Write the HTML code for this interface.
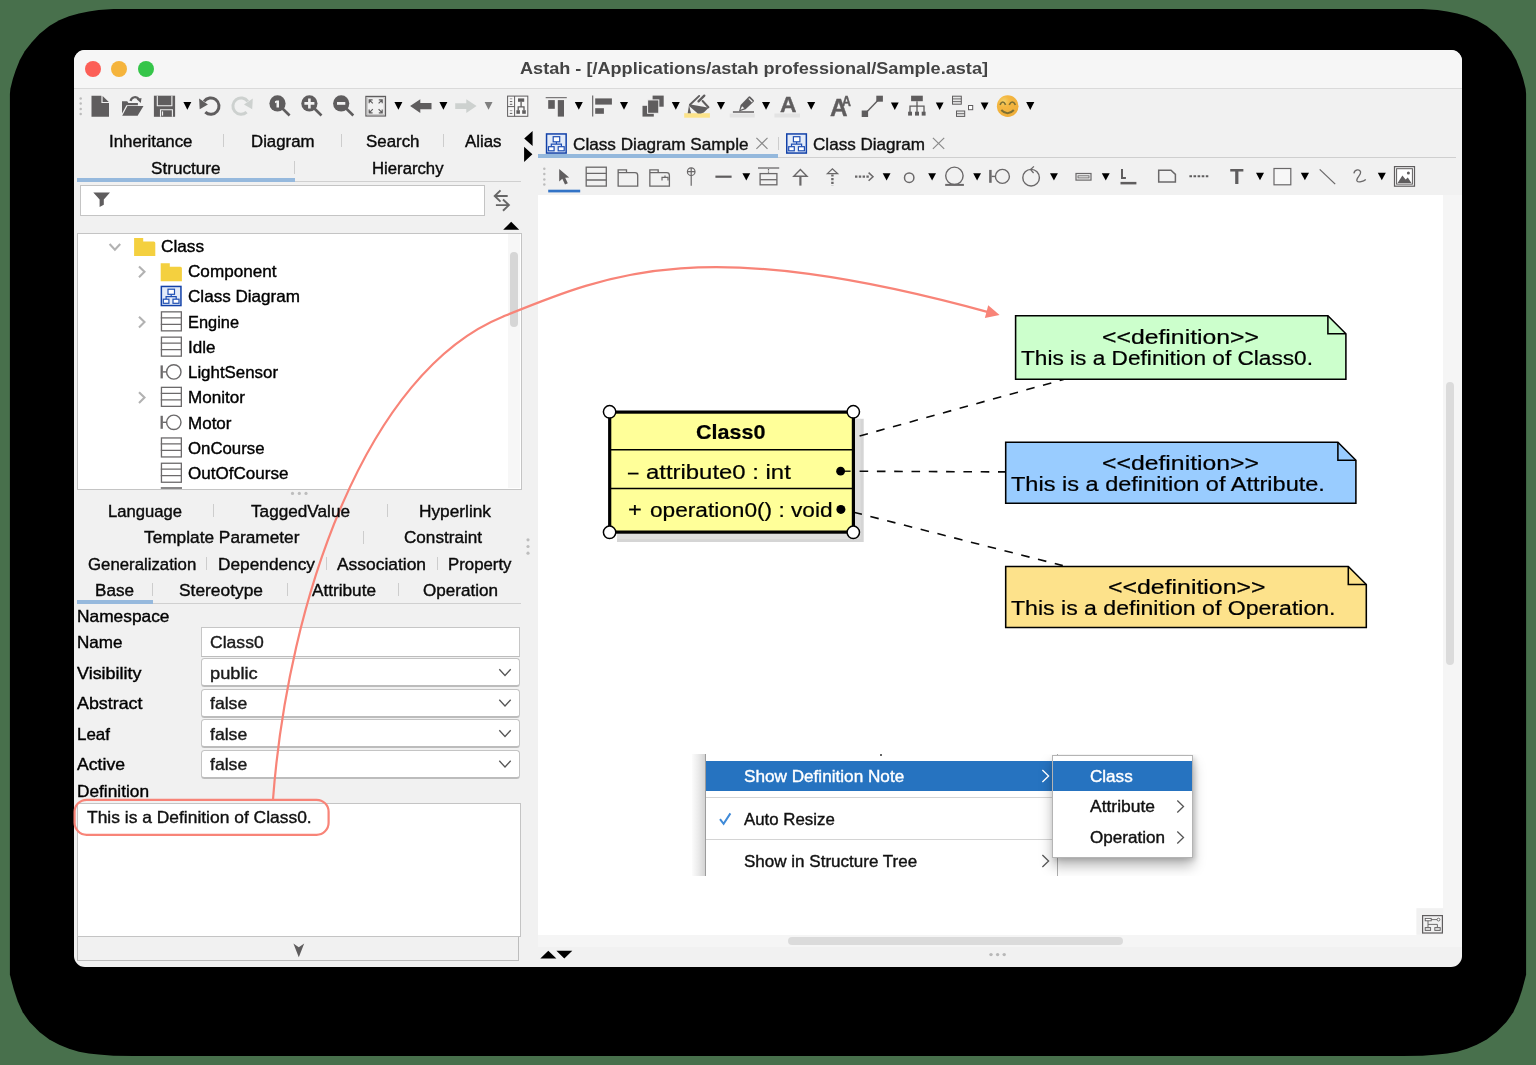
<!DOCTYPE html>
<html><head><meta charset="utf-8"><title>Astah</title>
<style>
html,body{margin:0;padding:0}
body{width:1536px;height:1065px;overflow:hidden;position:relative;background:#48704c;font-family:"Liberation Sans",sans-serif}
.a{position:absolute}
.t{position:absolute;white-space:pre;line-height:1em;transform-origin:0 50%;font-family:"Liberation Sans",sans-serif}
svg{position:absolute;left:0;top:0}
</style></head><body>
<svg width="1536" height="1065" viewBox="0 0 1536 1065"><path d="M9.9 93.7 L10.4 88.8 L12.8 78.9 L15.8 70.0 L19.7 60.2 L24.7 51.3 L31.6 42.4 L39.4 34.0 L49.3 26.1 L59.2 20.2 L69.0 16.3 L78.9 13.6 L88.8 11.6 L98.6 9.9 L113.4 9.1 L1422.6 9.1 L1437.4 9.9 L1447.2 11.6 L1457.1 13.6 L1467.0 16.3 L1476.8 20.2 L1486.7 26.1 L1496.6 34.0 L1504.4 42.4 L1511.3 51.3 L1516.3 60.2 L1520.2 70.0 L1523.2 78.9 L1525.6 88.8 L1526.1 93.7 L1526.1 974.8 L1522.2 989.6 L1518.2 1001.4 L1513.3 1012.3 L1506.4 1022.1 L1496.6 1032.0 L1486.7 1039.4 L1476.8 1044.8 L1467.0 1048.8 L1457.1 1051.7 L1447.2 1053.5 L1437.4 1054.5 L1422.6 1055.7 L1403.0 1056.0 L133.0 1056.0 L113.4 1055.7 L98.6 1054.5 L88.8 1053.5 L78.9 1051.7 L69.0 1048.8 L59.2 1044.8 L49.3 1039.4 L39.4 1032.0 L29.6 1022.1 L22.7 1012.3 L17.8 1001.4 L13.8 989.6 L9.9 974.8 Z" fill="#000"/></svg>
<div class="a" style="left:74px;top:50px;width:1388px;height:917px;background:#f1f1f1;border-radius:11px;overflow:hidden"><div class="a" style="left:0;top:0;width:1388px;height:38px;background:#f6f6f6;border-bottom:1px solid #dadada"></div></div>
<div class="a" style="left:85px;top:61px;width:16px;height:16px;border-radius:50%;background:#fc5f57"></div>
<div class="a" style="left:111.4px;top:61px;width:16px;height:16px;border-radius:50%;background:#f5b43c"></div>
<div class="a" style="left:138px;top:61px;width:16px;height:16px;border-radius:50%;background:#35c549"></div>
<div class="a" style="left:223px;top:134.2px;width:1.2px;height:13px;background:#cdcdcd"></div>
<div class="a" style="left:341px;top:134.2px;width:1.2px;height:13px;background:#cdcdcd"></div>
<div class="a" style="left:443px;top:134.2px;width:1.2px;height:13px;background:#cdcdcd"></div>
<div class="a" style="left:294px;top:161.2px;width:1.2px;height:13px;background:#cdcdcd"></div>
<div class="a" style="left:77px;top:181px;width:444px;height:1px;background:#d0d0d0"></div>
<div class="a" style="left:77px;top:178.2px;width:218px;height:3.6px;background:#96b9dd"></div>
<div class="a" style="left:80px;top:185px;width:403px;height:29px;background:#fff;border:1px solid #c4c4c4"></div>
<div class="a" style="left:77px;top:233px;width:443px;height:255px;background:#fff;border:1px solid #c4c4c4"></div>
<div class="a" style="left:508px;top:234px;width:12px;height:254px;background:#f7f7f7"></div>
<div class="a" style="left:510px;top:252px;width:8px;height:75px;background:#d6d6d6;border-radius:4px"></div>
<div class="a" style="left:213px;top:504.0px;width:1.2px;height:13px;background:#cdcdcd"></div>
<div class="a" style="left:387px;top:504.0px;width:1.2px;height:13px;background:#cdcdcd"></div>
<div class="a" style="left:363px;top:530.5px;width:1.2px;height:13px;background:#cdcdcd"></div>
<div class="a" style="left:206px;top:556.9000000000001px;width:1.2px;height:13px;background:#cdcdcd"></div>
<div class="a" style="left:325.5px;top:556.9000000000001px;width:1.2px;height:13px;background:#cdcdcd"></div>
<div class="a" style="left:436.5px;top:556.9000000000001px;width:1.2px;height:13px;background:#cdcdcd"></div>
<div class="a" style="left:152px;top:583.4000000000001px;width:1.2px;height:13px;background:#cdcdcd"></div>
<div class="a" style="left:287px;top:583.4000000000001px;width:1.2px;height:13px;background:#cdcdcd"></div>
<div class="a" style="left:397.5px;top:583.4000000000001px;width:1.2px;height:13px;background:#cdcdcd"></div>
<div class="a" style="left:77px;top:603px;width:444px;height:1px;background:#d0d0d0"></div>
<div class="a" style="left:77px;top:600px;width:75.6px;height:3.5px;background:#96b9dd"></div>
<div class="a" style="left:201px;top:627.3px;width:318.8px;height:29.5px;background:#fff;border:1px solid #c6c6c6;border-bottom:1.6px solid #bdbdbd;box-sizing:border-box"></div>
<div class="a" style="left:201px;top:658.3px;width:318.8px;height:29.2px;background:#fff;border:1px solid #c4c4c4;border-bottom:2px solid #bcbcbc;border-radius:3.5px;box-sizing:border-box"></div>
<div class="a" style="left:201px;top:688.8px;width:318.8px;height:29.2px;background:#fff;border:1px solid #c4c4c4;border-bottom:2px solid #bcbcbc;border-radius:3.5px;box-sizing:border-box"></div>
<div class="a" style="left:201px;top:719.3px;width:318.8px;height:29.2px;background:#fff;border:1px solid #c4c4c4;border-bottom:2px solid #bcbcbc;border-radius:3.5px;box-sizing:border-box"></div>
<div class="a" style="left:201px;top:749.8px;width:318.8px;height:29.2px;background:#fff;border:1px solid #c4c4c4;border-bottom:2px solid #bcbcbc;border-radius:3.5px;box-sizing:border-box"></div>
<div class="a" style="left:77px;top:803px;width:444px;height:134px;background:#fff;border:1px solid #c4c4c4;box-sizing:border-box"></div>
<div class="a" style="left:77px;top:937px;width:442px;height:24px;background:#f1f1f1;border:1px solid #bdbdbd;border-top:none;box-sizing:border-box"></div>
<div class="a" style="left:778px;top:136.79999999999998px;width:1.2px;height:13px;background:#cdcdcd"></div>
<div class="a" style="left:538px;top:157px;width:918px;height:1px;background:#cfcfcf"></div>
<div class="a" style="left:538px;top:154.3px;width:239.7px;height:3.4px;background:#94b8dc"></div>
<div class="a" style="left:538px;top:194.7px;width:923.5px;height:752.7px;background:#f5f5f5"></div>
<div class="a" style="left:538px;top:194.7px;width:905.2px;height:740.1px;background:#fff"></div>
<div class="a" style="left:1445.9px;top:382.3px;width:8.3px;height:283px;background:#dbdbdb;border-radius:4.2px"></div>
<div class="a" style="left:788.1px;top:937.2px;width:335.2px;height:8.3px;background:#dbdbdb;border-radius:4.2px"></div>
<div class="a" style="left:692.4px;top:754.3px;width:526px;height:121.6px;overflow:hidden"><div class="a" style="left:0;top:0;width:13.2px;height:122px;background:linear-gradient(to right,#fcfcfc,#ebebeb 45%,#d0d0d0)"></div><div class="a" style="left:12.8px;top:-5px;width:353.20000000000005px;height:140px;background:#fff;border-left:1.2px solid #9c9c9c;border-right:1.3px solid #b0b0b0;box-sizing:border-box"></div><div class="a" style="left:187.6px;top:0;width:2px;height:1.6px;background:#666"></div><div class="a" style="left:14.0px;top:6.7px;width:346.6px;height:30.2px;background:#2673c0"></div><div class="a" style="left:14.0px;top:42.5px;width:350.80000000000007px;height:1.2px;background:#d4d4d4"></div><div class="a" style="left:14.0px;top:84.8px;width:350.80000000000007px;height:1.2px;background:#d4d4d4"></div><div class="a" style="left:359.2px;top:1.0px;width:141.9000000000001px;height:102.40000000000009px;background:#fff;border:1.3px solid #b4b4b4;box-sizing:border-box;box-shadow:0 8px 12px rgba(0,0,0,.28),2px 2px 5px rgba(0,0,0,.15)"></div><div class="a" style="left:360.5px;top:6.5px;width:139.39999999999986px;height:30.2px;background:#2673c0"></div></div>
<svg width="1536" height="1065" viewBox="0 0 1536 1065">
<circle cx="80.7" cy="98.4" r="1.25" fill="#bcbcbc"/>
<circle cx="80.7" cy="103.6" r="1.25" fill="#bcbcbc"/>
<circle cx="80.7" cy="108.9" r="1.25" fill="#bcbcbc"/>
<circle cx="80.7" cy="114.1" r="1.25" fill="#bcbcbc"/>
<path d="M91.5 95.7 H101.4 V102.9 H109 V116.8 H91.5 Z M102.6 96 L108.8 102 H102.6 Z" fill="#5f5d5e"/>
<path d="M122 101.2 H127.2 L128.4 103 H137.9 V105.3 H126.4 L122 113.6 Z" fill="#5f5d5e"/>
<path d="M127.4 106 H143.5 L137.6 115.7 H122.2 Z" fill="#5f5d5e"/>
<path d="M130.6 101 C131.4 96.6 136.8 95.9 139.2 99.6" fill="none" stroke="#5f5d5e" stroke-width="2.2"/>
<path d="M136.7 99.2 L141.5 98.1 L140.8 102.9 Z" fill="#5f5d5e"/>
<rect x="153.9" y="95.7" width="21.2" height="21.1" fill="#5f5d5e"/>
<path d="M157.3 95.7 V105.7 H171.9 V95.7" fill="none" stroke="#f1f1f1" stroke-width="1.1"/>
<path d="M160.5 116.8 V109.8 H172.4 V116.8" fill="none" stroke="#f1f1f1" stroke-width="1.1"/>
<rect x="161.9" y="111.4" width="1.2" height="4.2" fill="#f1f1f1"/>
<path d="M183.4 102 H191.3 L187.35000000000002 109.8 Z" fill="#000"/>
<path d="M204.1 101.4 A8.2 8.2 0 1 1 205.3 112.2" fill="none" stroke="#5f5d5e" stroke-width="3"/>
<path d="M199.1 98.4 L199.7 109.2 L207.9 104.4 Z" fill="#5f5d5e"/>
<path d="M247.8 101.4 A8.2 8.2 0 1 0 246.6 112.2" fill="none" stroke="#cdd1cf" stroke-width="3"/>
<path d="M252.8 98.4 L252.2 109.2 L244 104.4 Z" fill="#cdd1cf"/>
<path d="M282.5 108.5 L289.6 115.5" stroke="#5f5d5e" stroke-width="2.6"/>
<circle cx="277.5" cy="103.4" r="8.1" fill="#5f5d5e"/>
<path d="M275 101.2 L276.6 100.4 H279 V107.4 H276.5 V102.6 L275 103.2 Z" fill="#f1f1f1"/>
<path d="M314.4 108.5 L321.5 115.5" stroke="#5f5d5e" stroke-width="2.6"/>
<circle cx="309.4" cy="103.4" r="8.1" fill="#5f5d5e"/>
<path d="M304.4 103.4 H314.4 M309.4 98.4 V108.4" stroke="#f1f1f1" stroke-width="2.6"/>
<path d="M346.2 108.5 L353.3 115.5" stroke="#5f5d5e" stroke-width="2.6"/>
<circle cx="341.2" cy="103.4" r="8.1" fill="#5f5d5e"/>
<path d="M337 103.4 H345.3" stroke="#f1f1f1" stroke-width="2.8"/>
<rect x="365.9" y="96.4" width="19.6" height="19.6" fill="none" stroke="#5f5d5e" stroke-width="1.2"/>
<rect x="367.2" y="97.7" width="17" height="17" fill="none" stroke="#b9b8b8" stroke-width=".8"/>
<path d="M372.8 103.39999999999999 L369.2 99.8 M372.59999999999997 99.8 H369.2 V103.2" fill="none" stroke="#5f5d5e" stroke-width="1.2"/>
<path d="M378.59999999999997 103.39999999999999 L382.2 99.8 M378.8 99.8 H382.2 V103.2" fill="none" stroke="#5f5d5e" stroke-width="1.2"/>
<path d="M372.8 109.2 L369.2 112.8 M372.59999999999997 112.8 H369.2 V109.39999999999999" fill="none" stroke="#5f5d5e" stroke-width="1.2"/>
<path d="M378.59999999999997 109.2 L382.2 112.8 M378.8 112.8 H382.2 V109.39999999999999" fill="none" stroke="#5f5d5e" stroke-width="1.2"/>
<path d="M394.4 102 H402.4 L398.4 109.8 Z" fill="#000"/>
<path d="M410.1 106.1 L420.3 99.3 V103 H431.5 V109.2 H420.3 V113.1 Z" fill="#5f5d5e"/>
<path d="M439.4 102 H447.4 L443.4 109.8 Z" fill="#000"/>
<path d="M476.6 106.1 L466.3 99.3 V103.3 H455.2 V109.1 H466.3 V113.1 Z" fill="#cdd1cf"/>
<path d="M484.6 102 H492.5 L488.55 109.8 Z" fill="#7f7f7f"/>
<rect x="507.6" y="96.1" width="20.2" height="20.2" fill="#f8f8f8" stroke="#5f5d5e" stroke-width="1"/>
<path d="M514.6 96.1 V116.3 M507.6 106.6 H514.6" stroke="#5f5d5e" stroke-width="1"/>
<path d="M509.8 101.6 H512.3 M509.8 104.3 H512.3 M509.8 113.4 H512.3" stroke="#5f5d5e" stroke-width="1"/><path d="M509.8 98.8 H512.3 M509.8 110.7 H512.3" stroke="#9a9899" stroke-width="1"/>
<rect x="518" y="98.4" width="6.2" height="3.4" fill="#5f5d5e"/><rect x="516.4" y="110.2" width="3.5" height="3.6" fill="#5f5d5e"/><rect x="522.2" y="110.2" width="3.6" height="3.6" fill="#5f5d5e"/>
<path d="M521.1 101.8 V106.8 M518.2 110.2 V106.8 H524 V110.2" fill="none" stroke="#5f5d5e" stroke-width="1.3"/>
<path d="M545.7 97.7 H566.8" stroke="#5f5d5e" stroke-width="1"/>
<rect x="548.2" y="100.1" width="6.6" height="8.7" fill="#5f5d5e"/><rect x="557.8" y="100.1" width="6.2" height="16.5" fill="#5f5d5e"/>
<path d="M574.8 102 H582.8 L578.8 109.8 Z" fill="#000"/>
<path d="M592.7 95.6 V116.6" stroke="#5f5d5e" stroke-width="1.1"/>
<rect x="595.2" y="98.4" width="16.7" height="6.2" fill="#5f5d5e"/><rect x="595.2" y="108.2" width="8.7" height="5.6" fill="#5f5d5e"/>
<path d="M620 102 H628 L624.0 109.8 Z" fill="#000"/>
<rect x="652.6" y="95.6" width="11.1" height="11.1" fill="#5f5d5e"/><rect x="642.5" y="105.8" width="11.3" height="10.8" fill="#5f5d5e"/>
<rect x="647.6" y="99.9" width="11.2" height="13.4" fill="#5f5d5e" stroke="#f1f1f1" stroke-width="1"/>
<path d="M671.8 102 H679.8 L675.8 109.8 Z" fill="#000"/>
<rect x="684.2" y="113.2" width="25.7" height="4.5" fill="#fce38a"/>
<path d="M689.3 104.3 L706.2 107.2 L708.9 107.5 L703.8 112.4 L700.8 113.4 H697.8 L689.4 106.2 Z" fill="#5f5d5e"/>
<path d="M689.9 104.7 L699.2 95.9" stroke="#5f5d5e" stroke-width="1.9" stroke-linecap="round"/>
<path d="M702.6 101 L708.4 107.2" stroke="#5f5d5e" stroke-width="2" stroke-linecap="round"/>
<path d="M698.5 101.4 L704.3 95.6" stroke="#5f5d5e" stroke-width="2.3" stroke-linecap="round"/>
<path d="M689 105 L691 113.3 H687.7 Z" fill="#5f5d5e"/>
<path d="M716.9 102 H725 L720.95 109.8 Z" fill="#000"/>
<rect x="729.7" y="113.6" width="25" height="3.9" fill="#e3e3e3"/>
<path d="M732.9 112 H754" stroke="#5f5d5e" stroke-width="1.5"/>
<path d="M739 111.4 L740.6 104.9 L748.6 96.7 Q749.5 95.8 750.4 96.7 L753.6 100 Q754.4 100.9 753.6 101.8 L745.6 109.3 Z" fill="#5f5d5e"/>
<path d="M740.4 109.8 L742.1 106.2 L744.3 108.2 Z" fill="#f1f1f1"/><path d="M749.2 98.9 L751.9 101.5" stroke="#f1f1f1" stroke-width="1.3" stroke-linecap="round"/>
<path d="M762 102 H770.1 L766.05 109.8 Z" fill="#000"/>
<rect x="774.4" y="113.5" width="25.6" height="4" fill="#e3e3e3"/>
<path d="M807.2 102 H815.2 L811.2 109.8 Z" fill="#000"/>
<rect x="861.7" y="110.5" width="6.4" height="6.5" fill="#5f5d5e"/><rect x="876.3" y="95.7" width="6.6" height="6" fill="#5f5d5e"/><path d="M865 113.8 L879.5 98.8" stroke="#5f5d5e" stroke-width="1.4"/>
<path d="M890.9 102.4 H898.7 L894.8 110 Z" fill="#000"/>
<rect x="911.1" y="95.7" width="11.7" height="5.5" fill="#5f5d5e"/>
<path d="M917 101.2 V106.2 M910 112 V106.2 H924 V112 M917 106.2 V112" fill="none" stroke="#5f5d5e" stroke-width="1.3"/>
<rect x="908.1" y="111.7" width="3.9" height="3.9" fill="#5f5d5e"/><rect x="915" y="111.7" width="4" height="3.9" fill="#5f5d5e"/><rect x="921.7" y="111.7" width="3.9" height="3.9" fill="#5f5d5e"/>
<path d="M935.8 102.4 H943.6 L939.7 110 Z" fill="#000"/>
<rect x="952.5" y="96.2" width="8.8" height="8" fill="#e6e6e6" stroke="#5f5d5e" stroke-width="1"/><path d="M952.5 98.9 H961.3 M952.5 101.6 H961.3" stroke="#5f5d5e" stroke-width=".9"/>
<rect x="956.5" y="111" width="8.2" height="5.4" fill="#e6e6e6" stroke="#5f5d5e" stroke-width="1"/><path d="M956.5 113.7 H964.7" stroke="#5f5d5e" stroke-width=".9"/>
<rect x="968.5" y="105.5" width="4.2" height="4.2" fill="#fff" stroke="#5f5d5e" stroke-width="1"/>
<path d="M980.7 102.4 H988.5 L984.6 110 Z" fill="#000"/>
<defs><radialGradient id="em" cx="32%" cy="28%" r="75%"><stop offset="0" stop-color="#f3d26a"/><stop offset=".35" stop-color="#f4b741"/><stop offset="1" stop-color="#efae3a"/></radialGradient></defs>
<circle cx="1007.7" cy="106.15" r="10.8" fill="url(#em)"/>
<path d="M1000 104.8 Q1002.8 99.2 1005.6 104.8 M1009.2 104.8 Q1012.3 99.2 1015.4 104.8" fill="none" stroke="#7d7034" stroke-width="1.7"/>
<path d="M1001.3 110 Q1007.6 116.6 1013.8 110" fill="none" stroke="#7d7034" stroke-width="2"/>
<path d="M1026.2 102 H1034.3 L1030.25 109.9 Z" fill="#000"/>
<path d="M524.2 138.5 L532.6 131 V146 Z M524.1 146.8 L532.4 154.3 L524.1 161.9 Z" fill="#000"/>
<path d="M93.3 192.5 H110 L103.8 199.6 V204.8 L99.6 207 V199.6 Z" fill="#5f5d5e"/>
<path d="M507.7 196 H495 M500.5 190.4 L494.7 196 L500.5 201.6 M495.9 205.1 H508.6 M503 199.5 L508.9 205.1 L503 210.8" fill="none" stroke="#666" stroke-width="1.9"/>
<path d="M503.2 229.8 L511.2 221.7 L519.2 229.8 Z" fill="#000"/>
<path d="M109.6 244 L114.9 249.6 L120.2 244" fill="none" stroke="#b2b2b2" stroke-width="2.1"/>
<path d="M139 266.40000000000003 L144.5 271.8 L139 277.2" fill="none" stroke="#b2b2b2" stroke-width="2.1"/>
<path d="M139 316.70000000000005 L144.5 322.1 L139 327.5" fill="none" stroke="#b2b2b2" stroke-width="2.1"/>
<path d="M139 392.20000000000005 L144.5 397.6 L139 403.0" fill="none" stroke="#b2b2b2" stroke-width="2.1"/>
<path d="M134.1 238 H143.2 V241.4 H153.79999999999998 Q155.29999999999998 241.4 155.29999999999998 243 V255.9 H134.1 Z" fill="#f4d03f"/>
<path d="M160.7 263.3 H169.79999999999998 V266.7 H180.39999999999998 Q181.89999999999998 266.7 181.89999999999998 268.3 V281.2 H160.7 Z" fill="#f4d03f"/>
<rect x="161.35" y="286.45" width="19.6" height="19.1" fill="#e3ebf8" stroke="#1241a8" stroke-width="1.5"/>
<path d="M171.2 294.3 V296.7 M166.1 299.2 V296.7 H176.2 V299.2" fill="none" stroke="#1f4fb4" stroke-width="1.2"/>
<rect x="168.0" y="289.2" width="6.5" height="5.1" fill="#fff" stroke="#1f4fb4" stroke-width="1.2"/>
<rect x="163.29999999999998" y="299.2" width="5.6" height="4.1" fill="#fff" stroke="#1f4fb4" stroke-width="1.2"/><rect x="173.0" y="299.2" width="6" height="4.1" fill="#fff" stroke="#1f4fb4" stroke-width="1.2"/>
<rect x="546.55" y="133.95" width="19.6" height="19.1" fill="#e3ebf8" stroke="#1241a8" stroke-width="1.5"/>
<path d="M556.4 141.79999999999998 V144.2 M551.3 146.7 V144.2 H561.4 V146.7" fill="none" stroke="#1f4fb4" stroke-width="1.2"/>
<rect x="553.1999999999999" y="136.7" width="6.5" height="5.1" fill="#fff" stroke="#1f4fb4" stroke-width="1.2"/>
<rect x="548.5" y="146.7" width="5.6" height="4.1" fill="#fff" stroke="#1f4fb4" stroke-width="1.2"/><rect x="558.1999999999999" y="146.7" width="6" height="4.1" fill="#fff" stroke="#1f4fb4" stroke-width="1.2"/>
<rect x="786.75" y="133.95" width="19.6" height="19.1" fill="#e3ebf8" stroke="#1241a8" stroke-width="1.5"/>
<path d="M796.6 141.79999999999998 V144.2 M791.5 146.7 V144.2 H801.6 V146.7" fill="none" stroke="#1f4fb4" stroke-width="1.2"/>
<rect x="793.4" y="136.7" width="6.5" height="5.1" fill="#fff" stroke="#1f4fb4" stroke-width="1.2"/>
<rect x="788.7" y="146.7" width="5.6" height="4.1" fill="#fff" stroke="#1f4fb4" stroke-width="1.2"/><rect x="798.4" y="146.7" width="6" height="4.1" fill="#fff" stroke="#1f4fb4" stroke-width="1.2"/>
<rect x="161.45000000000002" y="311.84999999999997" width="19.9" height="19" fill="#fff" stroke="#6c6a6b" stroke-width="1.3"/><path d="M160.8 317.8 H182.0 M160.8 324.3 H182.0" stroke="#6c6a6b" stroke-width="1.3"/>
<rect x="161.45000000000002" y="337.15" width="19.9" height="19" fill="#fff" stroke="#6c6a6b" stroke-width="1.3"/><path d="M160.8 343.1 H182.0 M160.8 349.6 H182.0" stroke="#6c6a6b" stroke-width="1.3"/>
<rect x="161.45000000000002" y="387.34999999999997" width="19.9" height="19" fill="#fff" stroke="#6c6a6b" stroke-width="1.3"/><path d="M160.8 393.3 H182.0 M160.8 399.8 H182.0" stroke="#6c6a6b" stroke-width="1.3"/>
<rect x="161.45000000000002" y="437.95" width="19.9" height="19" fill="#fff" stroke="#6c6a6b" stroke-width="1.3"/><path d="M160.8 443.90000000000003 H182.0 M160.8 450.40000000000003 H182.0" stroke="#6c6a6b" stroke-width="1.3"/>
<rect x="161.45000000000002" y="463.25" width="19.9" height="19" fill="#fff" stroke="#6c6a6b" stroke-width="1.3"/><path d="M160.8 469.20000000000005 H182.0 M160.8 475.70000000000005 H182.0" stroke="#6c6a6b" stroke-width="1.3"/>
<rect x="160.8" y="487.2" width="21.2" height="1.6" fill="#6c6a6b"/>
<path d="M161.7 365.4 V378.4" stroke="#6c6a6b" stroke-width="2.3"/><path d="M162.6 371.9 H166.6" stroke="#6c6a6b" stroke-width="1.4"/><circle cx="173.79999999999998" cy="371.9" r="7.2" fill="#fff" stroke="#6c6a6b" stroke-width="1.4"/>
<path d="M161.7 415.8 V428.8" stroke="#6c6a6b" stroke-width="2.3"/><path d="M162.6 422.3 H166.6" stroke="#6c6a6b" stroke-width="1.4"/><circle cx="173.79999999999998" cy="422.3" r="7.2" fill="#fff" stroke="#6c6a6b" stroke-width="1.4"/>
<circle cx="292.5" cy="493.4" r="1.6" fill="#bdbdbd"/>
<circle cx="299.3" cy="493.4" r="1.6" fill="#bdbdbd"/>
<circle cx="306" cy="493.4" r="1.6" fill="#bdbdbd"/>
<circle cx="528" cy="539.8" r="1.6" fill="#bdbdbd"/>
<circle cx="528" cy="546.5" r="1.6" fill="#bdbdbd"/>
<circle cx="528" cy="553.2" r="1.6" fill="#bdbdbd"/>
<circle cx="991" cy="954.6" r="1.7" fill="#b8b8b8"/>
<circle cx="997.6" cy="954.6" r="1.7" fill="#b8b8b8"/>
<circle cx="1004.2" cy="954.6" r="1.7" fill="#b8b8b8"/>
<path d="M499.3 669.3 L505 675.5 L510.7 669.3" fill="none" stroke="#555" stroke-width="1.3"/>
<path d="M499.3 699.8 L505 706 L510.7 699.8" fill="none" stroke="#555" stroke-width="1.3"/>
<path d="M499.3 730.3 L505 736.5 L510.7 730.3" fill="none" stroke="#555" stroke-width="1.3"/>
<path d="M499.3 760.8 L505 767 L510.7 760.8" fill="none" stroke="#555" stroke-width="1.3"/>
<path d="M293.4 943.6 L298.8 947.2 L304.2 943.6 L298.8 957.3 Z" fill="#5f5d5e"/>
<path d="M540.3 958.5 L548.3 950.8 L556.4 958.5 Z M556.4 950.8 H572.3 L564.3 958.5 Z" fill="#000"/>
<path d="M756.4 137.9 L767.5 148.9 M767.5 137.9 L756.4 148.9" stroke="#8a8a8a" stroke-width="1.2"/>
<path d="M932.9 137.9 L944.2 148.9 M944.2 137.9 L932.9 148.9" stroke="#8a8a8a" stroke-width="1.2"/>
<circle cx="544.3" cy="168.7" r="1.25" fill="#bcbcbc"/>
<circle cx="544.3" cy="174.1" r="1.25" fill="#bcbcbc"/>
<circle cx="544.3" cy="179.4" r="1.25" fill="#bcbcbc"/>
<circle cx="544.3" cy="184.6" r="1.25" fill="#bcbcbc"/>
<path d="M559.2 169 V181.4 L562.3 178.8 L565 184.6 L567.8 183.3 L565.2 177.8 L569.2 177.4 Z" fill="#5f5d5e"/>
<rect x="548.2" y="189.7" width="32" height="2.7" fill="#3273c6"/>
<rect x="586.2" y="167.2" width="20.1" height="18.9" fill="none" stroke="#6a6869" stroke-width="1.3"/><path d="M586.2 173.3 H606.3 M586.2 180 H606.3" stroke="#6a6869" stroke-width="1.3"/>
<path d="M618.15 172.7 V169.8 H626.5 V172.7 M618.15 172.7 H635.0 Q637.7 172.7 637.7 175.5 V186.1 H618.15 Z" fill="none" stroke="#6a6869" stroke-width="1.3"/>
<path d="M649.85 172.7 V169.8 H658.2 V172.7 M649.85 172.7 H666.7 Q669.4000000000001 172.7 669.4000000000001 175.5 V186.1 H649.85 Z" fill="none" stroke="#6a6869" stroke-width="1.3"/>
<path d="M662 180.6 V177.4 H668 V180.6 M665 177.4 V175.6" fill="none" stroke="#6a6869" stroke-width="1.2"/>
<circle cx="691.2" cy="171.7" r="3.8" fill="none" stroke="#6a6869" stroke-width="1.2"/><path d="M691.2 167.9 V185.7 M687.4 171.7 H695" stroke="#6a6869" stroke-width="1.2"/>
<path d="M715.4 176.7 H731.6" stroke="#5f5d5e" stroke-width="2.2"/>
<path d="M742.4 173.2 H750.2 L746.3 180.4 Z" fill="#000"/>
<path d="M758 168 H779.2" stroke="#6a6869" stroke-width="1.3"/><path d="M768.5 169 V173" stroke="#6a6869" stroke-width="1.2" stroke-dasharray="1.4 1"/>
<rect x="760.1" y="173.6" width="16.8" height="11.2" fill="none" stroke="#6a6869" stroke-width="1.3"/><path d="M760.1 179.7 H776.9" stroke="#6a6869" stroke-width="1.3"/>
<path d="M793.8 176.2 L800.4 169.6 L807 176.2 Z" fill="none" stroke="#6a6869" stroke-width="1.4"/><path d="M800.4 176.4 V185.6" stroke="#6a6869" stroke-width="2.2"/>
<path d="M827.4 173.6 L832.4 168.8 L837.6 173.6 Z" fill="none" stroke="#6a6869" stroke-width="1.3"/><path d="M832.4 174.4 V185.8" stroke="#6a6869" stroke-width="2.4" stroke-dasharray="2.2 1.5"/>
<path d="M855 176.7 H870" stroke="#6a6869" stroke-width="2.2" stroke-dasharray="2.4 1.4"/><path d="M868.6 172.6 L873 176.7 L868.6 180.8" fill="none" stroke="#6a6869" stroke-width="1.5"/>
<path d="M882.7 173.2 H890.5 L886.6 180.4 Z" fill="#000"/>
<circle cx="909.2" cy="177.7" r="4.7" fill="none" stroke="#6a6869" stroke-width="1.5"/>
<path d="M928.2 173.2 H936 L932.1 180.4 Z" fill="#000"/>
<circle cx="954.4" cy="175.8" r="8.7" fill="none" stroke="#6a6869" stroke-width="1.4"/><path d="M945.2 184.9 H963.9" stroke="#6a6869" stroke-width="2"/>
<path d="M973.2 173.2 H981 L977.1 180.4 Z" fill="#000"/>
<path d="M990.4 169.9 V182.8" stroke="#6a6869" stroke-width="2.5"/><path d="M991.5 176.4 H995.2" stroke="#6a6869" stroke-width="1.4"/><circle cx="1002.4" cy="176.4" r="7" fill="none" stroke="#6a6869" stroke-width="1.4"/>
<circle cx="1031.1" cy="177.7" r="8.3" fill="none" stroke="#6a6869" stroke-width="1.4"/><path d="M1033.9 166.4 L1030.6 169.6 L1033.6 173" fill="none" stroke="#6a6869" stroke-width="1.3"/>
<path d="M1050 173.2 H1057.9 L1053.95 180.4 Z" fill="#000"/>
<rect x="1076" y="173.5" width="15" height="6.6" fill="none" stroke="#6a6869" stroke-width="1.2"/><rect x="1078" y="175.8" width="11" height="2.1" fill="none" stroke="#6a6869" stroke-width=".9"/>
<path d="M1101.8 173.2 H1109.7 L1105.75 180.4 Z" fill="#000"/>
<path d="M1122 168.9 V178 H1125.9" fill="none" stroke="#5f5d5e" stroke-width="2"/><rect x="1120.5" y="181.9" width="15.9" height="2.5" fill="#5f5d5e"/>
<path d="M1158.7 170.2 H1171 L1175.4 174.4 V182 H1158.7 Z" fill="none" stroke="#6a6869" stroke-width="1.5"/>
<path d="M1189.4 176.3 H1208.3" stroke="#5f5d5e" stroke-width="2" stroke-dasharray="2.6 1.5"/>
<path d="M1256 172.8 H1264 L1260.0 180.3 Z" fill="#000"/>
<rect x="1274" y="168.5" width="16.8" height="16.3" fill="#f7f7f7" stroke="#6a6869" stroke-width="1.2"/>
<path d="M1300.8 172.8 H1309 L1304.9 180.3 Z" fill="#000"/>
<path d="M1319.7 169.4 L1335.2 184.1" stroke="#6a6869" stroke-width="1.3"/>
<path d="M1353.9 173.4 C1354.5 169.6 1359.8 168.4 1360.6 172 C1361.2 175.4 1355.4 178.2 1357 181 C1358.4 183 1363.4 181.4 1365.8 179.4" fill="none" stroke="#6a6869" stroke-width="1.3"/>
<path d="M1377.8 172.8 H1385.8 L1381.8 180.3 Z" fill="#000"/>
<rect x="1394.5" y="166.6" width="20" height="19.6" fill="#f4f4f4" stroke="#5f5d5e" stroke-width="1.2"/><rect x="1396.6" y="168.7" width="15.8" height="15.4" fill="#fff" stroke="#5f5d5e" stroke-width="1"/>
<path d="M1397.6 183 L1402.4 175.6 L1405.6 179.6 L1407.8 177.6 L1411.4 183 Z" fill="#5f5d5e"/><circle cx="1408.4" cy="173" r="1.5" fill="#5f5d5e"/>
<rect x="1416.4" y="908.2" width="26.8" height="26.6" fill="#f1f1f1"/>
<rect x="1422.6" y="915.6" width="19.8" height="17.4" fill="#f1f1f1" stroke="#5f5d5e" stroke-width="1.2"/>
<rect x="1425.2" y="918.4" width="6" height="2.4" fill="#fff" stroke="#5f5d5e" stroke-width=".9"/><path d="M1431.2 919.6 H1437" stroke="#5f5d5e" stroke-width=".9"/><circle cx="1438.5" cy="919.6" r="1.4" fill="#fff" stroke="#5f5d5e" stroke-width=".9"/>
<path d="M1428 920.8 V927.4 M1428 924.4 H1437.4 V927.4" fill="none" stroke="#5f5d5e" stroke-width=".9"/><rect x="1425.2" y="927.6" width="5.4" height="2.8" fill="#ddd" stroke="#5f5d5e" stroke-width=".9"/><rect x="1434.8" y="927.6" width="5.4" height="2.8" fill="#ddd" stroke="#5f5d5e" stroke-width=".9"/>
<rect x="617" y="418.8" width="246.7" height="123.2" fill="#d5d5d5"/>
<rect x="617" y="418.8" width="243.6" height="120.2" fill="#dedede"/>
<path d="M859.6 436 L1063.6 379.5" stroke="#0a0a0a" stroke-width="1.6" stroke-dasharray="8.6 8.7" fill="none"/>
<path d="M842.3 471.2 L1005.3 471.9" stroke="#0a0a0a" stroke-width="1.6" stroke-dasharray="8.6 8.7" fill="none"/>
<path d="M853.6 512.2 L1062.8 565.6" stroke="#0a0a0a" stroke-width="1.6" stroke-dasharray="8.6 8.7" fill="none"/>
<rect x="609.7" y="412.1" width="243.7" height="120" fill="#ffff99" stroke="#000" stroke-width="3.2"/>
<path d="M611 449.8 H852 M611 488.5 H852" stroke="#000" stroke-width="1.5"/>
<circle cx="840.6" cy="471.2" r="4.4" fill="#000"/><circle cx="840.9" cy="509.4" r="4.5" fill="#000"/>
<path d="M842 471.2 H850.6" stroke="#000" stroke-width="1.3"/>
<circle cx="609.6" cy="411.8" r="6.2" fill="#fff" stroke="#000" stroke-width="1.5"/>
<circle cx="853.3" cy="411.8" r="6.2" fill="#fff" stroke="#000" stroke-width="1.5"/>
<circle cx="609.6" cy="532.3" r="6.2" fill="#fff" stroke="#000" stroke-width="1.5"/>
<circle cx="853.3" cy="532.3" r="6.2" fill="#fff" stroke="#000" stroke-width="1.5"/>
<path d="M1015.6 315.8 H1327.9 L1345.9 333.8 V379.2 H1015.6 Z" fill="#ccffcc" stroke="#000" stroke-width="1.55" stroke-linejoin="miter"/>
<path d="M1327.9 315.8 V333.8 H1345.9" fill="none" stroke="#000" stroke-width="1.55"/>
<path d="M1005.7 442.3 H1337.9 L1355.9 460.3 V503.2 H1005.7 Z" fill="#99ccff" stroke="#000" stroke-width="1.55" stroke-linejoin="miter"/>
<path d="M1337.9 442.3 V460.3 H1355.9" fill="none" stroke="#000" stroke-width="1.55"/>
<path d="M1005.7 566.5 H1348.3 L1366.3 584.5 V627.4 H1005.7 Z" fill="#fde28b" stroke="#000" stroke-width="1.55" stroke-linejoin="miter"/>
<path d="M1348.3 566.5 V584.5 H1366.3" fill="none" stroke="#000" stroke-width="1.55"/>
<path d="M1042.4 770 l6.2 6 l-6.2 6" fill="none" stroke="#fff" stroke-width="1.3"/>
<path d="M1042.4 855 l6.2 6 l-6.2 6" fill="none" stroke="#555" stroke-width="1.3"/>
<path d="M1177.3 800.5 l6.2 6 l-6.2 6" fill="none" stroke="#555" stroke-width="1.3"/>
<path d="M1177.3 831.5 l6.2 6 l-6.2 6" fill="none" stroke="#555" stroke-width="1.3"/>
<path d="M720 819.2 l3.6 4.6 l6.8 -10.4" fill="none" stroke="#3f8ad8" stroke-width="2"/>
<rect x="74.6" y="799.8" width="254" height="35" rx="12" ry="12" fill="none" stroke="#f88478" stroke-width="2.2"/>
<path d="M273 799.5 C288.2 598.7 366.6 372.3 502.7 316.7 C610.8 272.6 703 233.7 990 312.6" fill="none" stroke="#f88478" stroke-width="2.2"/>
<path d="M999.6 315.1 L988.2 305.3 L984.9 318.1 Z" fill="#f88478"/>
</svg>
<div id="tx" style="position:absolute;left:0;top:0;width:1536px;height:1065px;will-change:transform">
<span class="t" style="left:520.0px;top:60.2px;font-size:17px;font-weight:700;color:#444;transform:scaleX(1.0654)">Astah - [/Applications/astah professional/Sample.asta]</span>
<span class="t" style="left:109.0px;top:133.3px;font-size:16.3px;color:#0a0a0a;-webkit-text-stroke:0.38px;transform:scaleX(1.0365)">Inheritance</span>
<span class="t" style="left:251.0px;top:133.3px;font-size:16.3px;color:#0a0a0a;-webkit-text-stroke:0.38px;transform:scaleX(1.0320)">Diagram</span>
<span class="t" style="left:366.0px;top:133.3px;font-size:16.3px;color:#0a0a0a;-webkit-text-stroke:0.38px;transform:scaleX(1.0369)">Search</span>
<span class="t" style="left:464.5px;top:133.3px;font-size:16.3px;color:#0a0a0a;-webkit-text-stroke:0.38px;transform:scaleX(1.0341)">Alias</span>
<span class="t" style="left:151.0px;top:160.0px;font-size:16.3px;color:#0a0a0a;-webkit-text-stroke:0.38px;transform:scaleX(1.0520)">Structure</span>
<span class="t" style="left:372.0px;top:160.0px;font-size:16.3px;color:#0a0a0a;-webkit-text-stroke:0.38px;transform:scaleX(1.0262)">Hierarchy</span>
<span class="t" style="left:160.5px;top:237.9px;font-size:16.5px;-webkit-text-stroke:0.38px;transform:scaleX(1.0420)">Class</span>
<span class="t" style="left:187.5px;top:263.2px;font-size:16.5px;-webkit-text-stroke:0.38px;transform:scaleX(1.0374)">Component</span>
<span class="t" style="left:187.5px;top:288.4px;font-size:16.5px;-webkit-text-stroke:0.38px;transform:scaleX(1.0351)">Class Diagram</span>
<span class="t" style="left:187.5px;top:313.7px;font-size:16.5px;-webkit-text-stroke:0.38px;transform:scaleX(0.9924)">Engine</span>
<span class="t" style="left:187.5px;top:338.9px;font-size:16.5px;-webkit-text-stroke:0.38px;transform:scaleX(1.0335)">Idle</span>
<span class="t" style="left:187.5px;top:364.1px;font-size:16.5px;-webkit-text-stroke:0.38px;transform:scaleX(1.0220)">LightSensor</span>
<span class="t" style="left:187.5px;top:389.4px;font-size:16.5px;-webkit-text-stroke:0.38px;transform:scaleX(1.0358)">Monitor</span>
<span class="t" style="left:187.5px;top:414.6px;font-size:16.5px;-webkit-text-stroke:0.38px;transform:scaleX(1.0311)">Motor</span>
<span class="t" style="left:187.5px;top:439.9px;font-size:16.5px;-webkit-text-stroke:0.38px;transform:scaleX(1.0172)">OnCourse</span>
<span class="t" style="left:187.5px;top:465.1px;font-size:16.5px;-webkit-text-stroke:0.38px;transform:scaleX(1.0338)">OutOfCourse</span>
<span class="t" style="left:107.5px;top:502.8px;font-size:16.3px;color:#0a0a0a;-webkit-text-stroke:0.38px;transform:scaleX(1.0214)">Language</span>
<span class="t" style="left:251.0px;top:502.8px;font-size:16.3px;color:#0a0a0a;-webkit-text-stroke:0.38px;transform:scaleX(1.0548)">TaggedValue</span>
<span class="t" style="left:418.5px;top:502.8px;font-size:16.3px;color:#0a0a0a;-webkit-text-stroke:0.38px;transform:scaleX(1.0608)">Hyperlink</span>
<span class="t" style="left:143.5px;top:529.3px;font-size:16.3px;color:#0a0a0a;-webkit-text-stroke:0.38px;transform:scaleX(1.0606)">Template Parameter</span>
<span class="t" style="left:403.5px;top:529.3px;font-size:16.3px;color:#0a0a0a;-webkit-text-stroke:0.38px;transform:scaleX(1.0509)">Constraint</span>
<span class="t" style="left:87.7px;top:555.7px;font-size:16.3px;color:#0a0a0a;-webkit-text-stroke:0.38px;transform:scaleX(1.0314)">Generalization</span>
<span class="t" style="left:217.8px;top:555.7px;font-size:16.3px;color:#0a0a0a;-webkit-text-stroke:0.38px;transform:scaleX(1.0608)">Dependency</span>
<span class="t" style="left:337.0px;top:555.7px;font-size:16.3px;color:#0a0a0a;-webkit-text-stroke:0.38px;transform:scaleX(1.0689)">Association</span>
<span class="t" style="left:448.0px;top:555.7px;font-size:16.3px;color:#0a0a0a;-webkit-text-stroke:0.38px;transform:scaleX(1.0317)">Property</span>
<span class="t" style="left:94.5px;top:582.2px;font-size:16.3px;color:#0a0a0a;-webkit-text-stroke:0.38px;transform:scaleX(1.0505)">Base</span>
<span class="t" style="left:179.0px;top:582.2px;font-size:16.3px;color:#0a0a0a;-webkit-text-stroke:0.38px;transform:scaleX(1.0667)">Stereotype</span>
<span class="t" style="left:311.5px;top:582.2px;font-size:16.3px;color:#0a0a0a;-webkit-text-stroke:0.38px;transform:scaleX(1.0554)">Attribute</span>
<span class="t" style="left:422.5px;top:582.2px;font-size:16.3px;color:#0a0a0a;-webkit-text-stroke:0.38px;transform:scaleX(1.0487)">Operation</span>
<span class="t" style="left:77.0px;top:607.7px;font-size:16.5px;-webkit-text-stroke:0.38px;transform:scaleX(1.0506)">Namespace</span>
<span class="t" style="left:77.0px;top:633.9px;font-size:16.5px;-webkit-text-stroke:0.38px;transform:scaleX(1.0337)">Name</span>
<span class="t" style="left:77.0px;top:664.7px;font-size:16.5px;-webkit-text-stroke:0.38px;transform:scaleX(1.0877)">Visibility</span>
<span class="t" style="left:77.0px;top:695.2px;font-size:16.5px;-webkit-text-stroke:0.38px;transform:scaleX(1.0821)">Abstract</span>
<span class="t" style="left:77.0px;top:725.9px;font-size:16.5px;-webkit-text-stroke:0.38px;transform:scaleX(1.0272)">Leaf</span>
<span class="t" style="left:77.0px;top:756.4px;font-size:16.5px;-webkit-text-stroke:0.38px;transform:scaleX(1.0682)">Active</span>
<span class="t" style="left:77.0px;top:782.9px;font-size:16.5px;-webkit-text-stroke:0.38px;transform:scaleX(1.0466)">Definition</span>
<span class="t" style="left:209.8px;top:633.9px;font-size:16.5px;color:#1a1a1a;-webkit-text-stroke:0.38px;transform:scaleX(1.0647)">Class0</span>
<span class="t" style="left:209.8px;top:664.7px;font-size:16.5px;color:#1a1a1a;-webkit-text-stroke:0.38px;transform:scaleX(1.1061)">public</span>
<span class="t" style="left:209.8px;top:695.2px;font-size:16.5px;color:#1a1a1a;-webkit-text-stroke:0.38px;transform:scaleX(1.0671)">false</span>
<span class="t" style="left:209.8px;top:725.9px;font-size:16.5px;color:#1a1a1a;-webkit-text-stroke:0.38px;transform:scaleX(1.0671)">false</span>
<span class="t" style="left:209.8px;top:756.4px;font-size:16.5px;color:#1a1a1a;-webkit-text-stroke:0.38px;transform:scaleX(1.0671)">false</span>
<span class="t" style="left:86.8px;top:809.4px;font-size:16.5px;color:#111;-webkit-text-stroke:0.38px;transform:scaleX(1.0561)">This is a Definition of Class0.</span>
<span class="t" style="left:573.0px;top:135.5px;font-size:16.5px;color:#111;-webkit-text-stroke:0.38px;transform:scaleX(1.0401)">Class Diagram Sample</span>
<span class="t" style="left:813.0px;top:135.5px;font-size:16.5px;color:#111;-webkit-text-stroke:0.38px;transform:scaleX(1.0351)">Class Diagram</span>
<span class="t" style="left:780.4px;top:94.4px;font-size:21.9px;font-weight:700;color:#5f5d5e;-webkit-text-stroke:0.38px;transform:scaleX(1.0435)">A</span>
<span class="t" style="left:829.6px;top:96.1px;font-size:24.7px;font-weight:700;color:#5f5d5e;-webkit-text-stroke:0.38px;transform:scaleX(0.9863)">A</span>
<span class="t" style="left:842.0px;top:93.8px;font-size:14.4px;font-weight:700;color:#5f5d5e;-webkit-text-stroke:0.38px;transform:scaleX(0.8649)">A</span>
<span class="t" style="left:1230.4px;top:166.0px;font-size:21.9px;font-weight:700;color:#5f5d5e;transform:scaleX(1.0168)">T</span>
<span class="t" style="left:695.6px;top:422.4px;font-size:20.4px;font-weight:700;-webkit-text-stroke:0.22px;transform:scaleX(1.0553)">Class0</span>
<span class="t" style="left:627.6px;top:461.7px;font-size:20px;-webkit-text-stroke:0.22px;transform:scaleX(0.9348)">–</span>
<span class="t" style="left:645.6px;top:461.7px;font-size:20px;-webkit-text-stroke:0.22px;transform:scaleX(1.1948)">attribute0 : int</span>
<span class="t" style="left:627.6px;top:499.5px;font-size:20px;-webkit-text-stroke:0.22px;transform:scaleX(1.1807)">+</span>
<span class="t" style="left:650.4px;top:499.5px;font-size:20px;-webkit-text-stroke:0.22px;transform:scaleX(1.1327)">operation0() : void</span>
<span class="t" style="left:1102.0px;top:326.8px;font-size:20px;-webkit-text-stroke:0.22px;transform:scaleX(1.2384)">&lt;&lt;definition&gt;&gt;</span>
<span class="t" style="left:1021.0px;top:347.7px;font-size:20px;-webkit-text-stroke:0.22px;transform:scaleX(1.1323)">This is a Definition of Class0.</span>
<span class="t" style="left:1102.0px;top:453.1px;font-size:20px;-webkit-text-stroke:0.22px;transform:scaleX(1.2384)">&lt;&lt;definition&gt;&gt;</span>
<span class="t" style="left:1010.5px;top:473.6px;font-size:20px;-webkit-text-stroke:0.22px;transform:scaleX(1.1765)">This is a definition of Attribute.</span>
<span class="t" style="left:1107.5px;top:577.4px;font-size:20px;-webkit-text-stroke:0.22px;transform:scaleX(1.2423)">&lt;&lt;definition&gt;&gt;</span>
<span class="t" style="left:1010.5px;top:598.2px;font-size:20px;-webkit-text-stroke:0.22px;transform:scaleX(1.1537)">This is a definition of Operation.</span>
<span class="t" style="left:743.8px;top:767.8px;font-size:16.5px;color:#fff;-webkit-text-stroke:0.38px;transform:scaleX(1.0396)">Show Definition Note</span>
<span class="t" style="left:743.8px;top:810.6px;font-size:16.5px;color:#111;-webkit-text-stroke:0.38px;transform:scaleX(1.0206)">Auto Resize</span>
<span class="t" style="left:743.8px;top:853.1px;font-size:16.5px;color:#111;-webkit-text-stroke:0.38px;transform:scaleX(1.0320)">Show in Structure Tree</span>
<span class="t" style="left:1090.0px;top:767.9px;font-size:16.5px;color:#fff;-webkit-text-stroke:0.38px;transform:scaleX(1.0348)">Class</span>
<span class="t" style="left:1090.0px;top:798.1px;font-size:16.5px;color:#111;-webkit-text-stroke:0.38px;transform:scaleX(1.0577)">Attribute</span>
<span class="t" style="left:1090.0px;top:829.1px;font-size:16.5px;color:#111;-webkit-text-stroke:0.38px;transform:scaleX(1.0349)">Operation</span>
</div>
</body></html>
